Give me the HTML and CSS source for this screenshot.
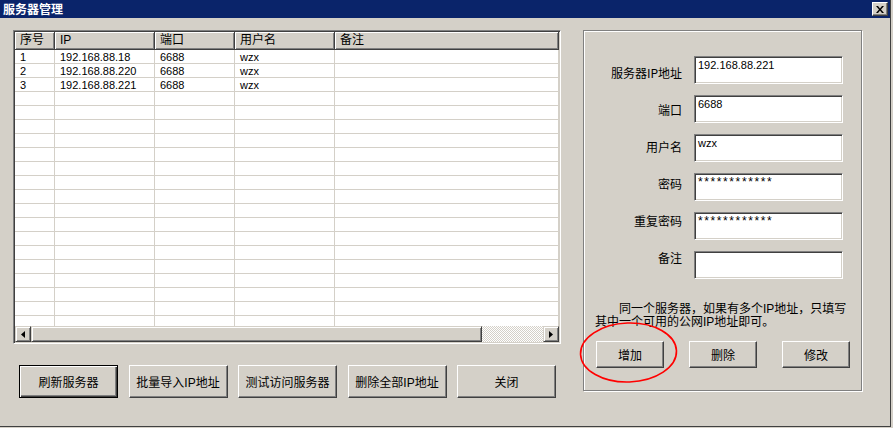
FILE: index.html
```html
<!DOCTYPE html>
<html>
<head>
    <meta charset="utf-8">
    <title>服务器管理</title>
    <link rel="stylesheet" href="styles.css">
</head>
<body>
    <div class="window">
        <div class="titlebar">
            <span class="title">服务器管理</span>
            <button class="close-btn" title="关闭">
                <svg width="8" height="7" viewBox="0 0 8 7">
                    <path d="M0 0h2l2 2.5L6 0h2L5 3.5 8 7H6L4 4.5 2 7H0l3-3.5z" fill="#000"/>
                </svg>
            </button>
        </div>

        <div class="client">
            <div class="left-pane">
                <div class="listview">
                    <div class="list-head row">
                        <span>序号</span><span>IP</span><span>端口</span><span>用户名</span><span>备注</span>
                    </div>
                    <div class="list-body">
                        <div class="row"><span>1</span><span>192.168.88.18</span><span>6688</span><span>wzx</span><span></span></div>
                        <div class="row"><span>2</span><span>192.168.88.220</span><span>6688</span><span>wzx</span><span></span></div>
                        <div class="row"><span>3</span><span>192.168.88.221</span><span>6688</span><span>wzx</span><span></span></div>
                        <div class="row"><span></span><span></span><span></span><span></span><span></span></div>
                        <div class="row"><span></span><span></span><span></span><span></span><span></span></div>
                        <div class="row"><span></span><span></span><span></span><span></span><span></span></div>
                        <div class="row"><span></span><span></span><span></span><span></span><span></span></div>
                        <div class="row"><span></span><span></span><span></span><span></span><span></span></div>
                        <div class="row"><span></span><span></span><span></span><span></span><span></span></div>
                        <div class="row"><span></span><span></span><span></span><span></span><span></span></div>
                        <div class="row"><span></span><span></span><span></span><span></span><span></span></div>
                        <div class="row"><span></span><span></span><span></span><span></span><span></span></div>
                        <div class="row"><span></span><span></span><span></span><span></span><span></span></div>
                        <div class="row"><span></span><span></span><span></span><span></span><span></span></div>
                        <div class="row"><span></span><span></span><span></span><span></span><span></span></div>
                        <div class="row"><span></span><span></span><span></span><span></span><span></span></div>
                        <div class="row"><span></span><span></span><span></span><span></span><span></span></div>
                        <div class="row"><span></span><span></span><span></span><span></span><span></span></div>
                        <div class="row"><span></span><span></span><span></span><span></span><span></span></div>
                        <div class="row"><span></span><span></span><span></span><span></span><span></span></div>
                    </div>
                    <div class="hscroll">
                        <div class="arrow">
                            <svg width="4" height="7" viewBox="0 0 4 7"><path d="M4 0v7L0 3.5z" fill="#000"/></svg>
                        </div>
                        <div class="thumb"></div>
                        <div class="track"></div>
                        <div class="arrow">
                            <svg width="4" height="7" viewBox="0 0 4 7"><path d="M0 0v7l4-3.5z" fill="#000"/></svg>
                        </div>
                    </div>
                </div>

                <div class="actions">
                    <button class="btn wide default">刷新服务器</button>
                    <button class="btn wide">批量导入IP地址</button>
                    <button class="btn wide">测试访问服务器</button>
                    <button class="btn wide">删除全部IP地址</button>
                    <button class="btn wide">关闭</button>
                </div>
            </div>

            <div class="groupbox">
                <div class="fields">
                    <div class="labels">
                        <label>服务器IP地址</label>
                        <label>端口</label>
                        <label>用户名</label>
                        <label>密码</label>
                        <label>重复密码</label>
                        <label>备注</label>
                    </div>
                    <div class="edits">
                        <div class="edit">192.168.88.221</div>
                        <div class="edit">6688</div>
                        <div class="edit">wzx</div>
                        <div class="edit secret">************</div>
                        <div class="edit secret">************</div>
                        <div class="edit"></div>
                    </div>
                </div>

                <p class="note">同一个服务器，如果有多个IP地址，只填写<br>其中一个可用的公网IP地址即可。</p>

                <div class="group-actions">
                    <button class="btn small">增加</button>
                    <button class="btn small">删除</button>
                    <button class="btn small">修改</button>
                </div>
            </div>
        </div>

        <!-- hand-drawn circle around the add button -->
        <svg class="mark" width="100" height="64" viewBox="0 0 100 64">
            <ellipse cx="49.5" cy="31.5" rx="48" ry="29.5" fill="none" stroke="#f00" stroke-width="1.6" transform="rotate(-2 49.5 31.5)"/>
        </svg>
    </div>
</body>
</html>
```

FILE: styles.css
```css
html, body {
    margin: 0;
    padding: 0;
    background-color: #d4d0c8;
}
body {
    font-family: "Liberation Sans", "Noto Sans CJK SC", sans-serif;
    font-size: 12px;
    color: #000;
}
.window {
    position: relative;
    width: 890px;
    height: 426px;
    background-color: #d4d0c8;
    border-right: 1px solid #404040;
    border-bottom: 1px solid #404040;
}
.titlebar {
    height: 18px;
    background-color: #0a246a;
    display: flex;
    align-items: center;
    justify-content: space-between;
    padding: 0 2px 0 3px;
}
.title {
    color: #fff;
    font-weight: bold;
    font-family: "Noto Sans CJK SC", sans-serif;
    font-size: 12px;
    line-height: 18px;
}
.close-btn {
    width: 16px;
    height: 14px;
    padding: 0;
    display: flex;
    align-items: center;
    justify-content: center;
    background-color: #d4d0c8;
    border: 1px solid;
    border-color: #fff #404040 #404040 #fff;
    box-shadow: inset -1px -1px #808080;
}

.client {
    display: flex;
    gap: 22px;
    padding: 12px 0 0 13px;
}

/* list view */
.left-pane {
    width: 548px;
}
.listview {
    width: 548px;
    height: 314px;
    box-sizing: border-box;
    border: 1px solid;
    border-color: #808080 #fff #fff #808080;
    box-shadow: inset 1px 1px #404040, inset -1px -1px #d4d0c8;
    padding: 1px;
    background-color: #fff;
    display: flex;
    flex-direction: column;
}
.row {
    display: grid;
    grid-template-columns: 40px 100px 80px 100px 224px;
}
.row span {
    height: 13px;
    line-height: 13px;
    padding: 1px 0 0 5px;
    box-sizing: border-box;
    border-right: 1px solid #d4d0c8;
    border-bottom: 1px solid #d4d0c8;
    height: 14px;
    font-size: 11px;
    white-space: nowrap;
    overflow: hidden;
}
.list-head span {
    height: 18px;
    line-height: 16px;
    padding: 0 0 0 5px;
    font-size: 12px;
    background-color: #d4d0c8;
    border-right: 1px solid #404040;
    border-bottom: 1px solid #404040;
    box-shadow: inset 1px 1px #fff, inset -1px -1px #808080;
}
.list-body {
    height: 276px;
    overflow: hidden;
}
.hscroll {
    height: 16px;
    display: flex;
}
.arrow, .thumb {
    box-sizing: border-box;
    height: 16px;
    background-color: #d4d0c8;
    border: 1px solid;
    border-color: #d4d0c8 #404040 #404040 #d4d0c8;
    box-shadow: inset 1px 1px #fff, inset -1px -1px #808080;
}
.arrow {
    width: 16px;
    display: flex;
    align-items: center;
    justify-content: center;
}
.thumb {
    width: 451px;
}
.track {
    flex: 1;
    background: repeating-conic-gradient(#fff 0 25%, #d4d0c8 0 50%) 0 0 / 2px 2px;
}

/* buttons */
.btn {
    box-sizing: border-box;
    padding: 0;
    font-family: "Liberation Sans", "Noto Sans CJK SC", sans-serif;
    font-size: 12px;
    color: #000;
    background-color: #d4d0c8;
    border: 1px solid;
    border-color: #fff #404040 #404040 #fff;
    box-shadow: inset -1px -1px #808080;
}
.btn.default {
    border-color: #000;
    box-shadow: inset 1px 1px #fff, inset -1px -1px #404040, inset -2px -2px #808080;
}
.actions {
    display: flex;
    gap: 10.5px;
    margin-top: 21px;
    padding-left: 6px;
}
.btn.wide {
    width: 99px;
    height: 33px;
}

/* right-hand group */
.groupbox {
    width: 279px;
    height: 361px;
    box-sizing: border-box;
    border: 1px solid #808080;
    box-shadow: 1px 1px #fff, inset 1px 1px #fff;
}
.fields {
    display: flex;
    gap: 12px;
}
.labels {
    width: 98px;
    padding-top: 23px;
    display: flex;
    flex-direction: column;
}
.labels label {
    height: 37px;
    line-height: 37px;
    text-align: right;
    font-family: "Noto Sans CJK SC", sans-serif;
}
.edits {
    padding-top: 25px;
    display: flex;
    flex-direction: column;
    gap: 11px;
}
.edit {
    width: 149px;
    height: 28px;
    box-sizing: border-box;
    padding: 2px 3px;
    background-color: #fff;
    border: 1px solid;
    border-color: #808080 #fff #fff #808080;
    box-shadow: inset 1px 1px #404040, inset -1px -1px #d4d0c8;
    font-size: 11px;
    line-height: 13px;
}
.edit.secret {
    letter-spacing: 1.6px;
    font-size: 12px;
    line-height: 12px;
}
.note {
    margin: 24px 0 0 11px;
    text-indent: 24px;
    line-height: 13px;
    white-space: nowrap;
}
.group-actions {
    display: flex;
    gap: 25px;
    margin-top: 12px;
    padding-left: 12px;
}
.btn.small {
    width: 68px;
    height: 27px;
}

.mark {
    position: absolute;
    left: 579px;
    top: 321px;
}
```
